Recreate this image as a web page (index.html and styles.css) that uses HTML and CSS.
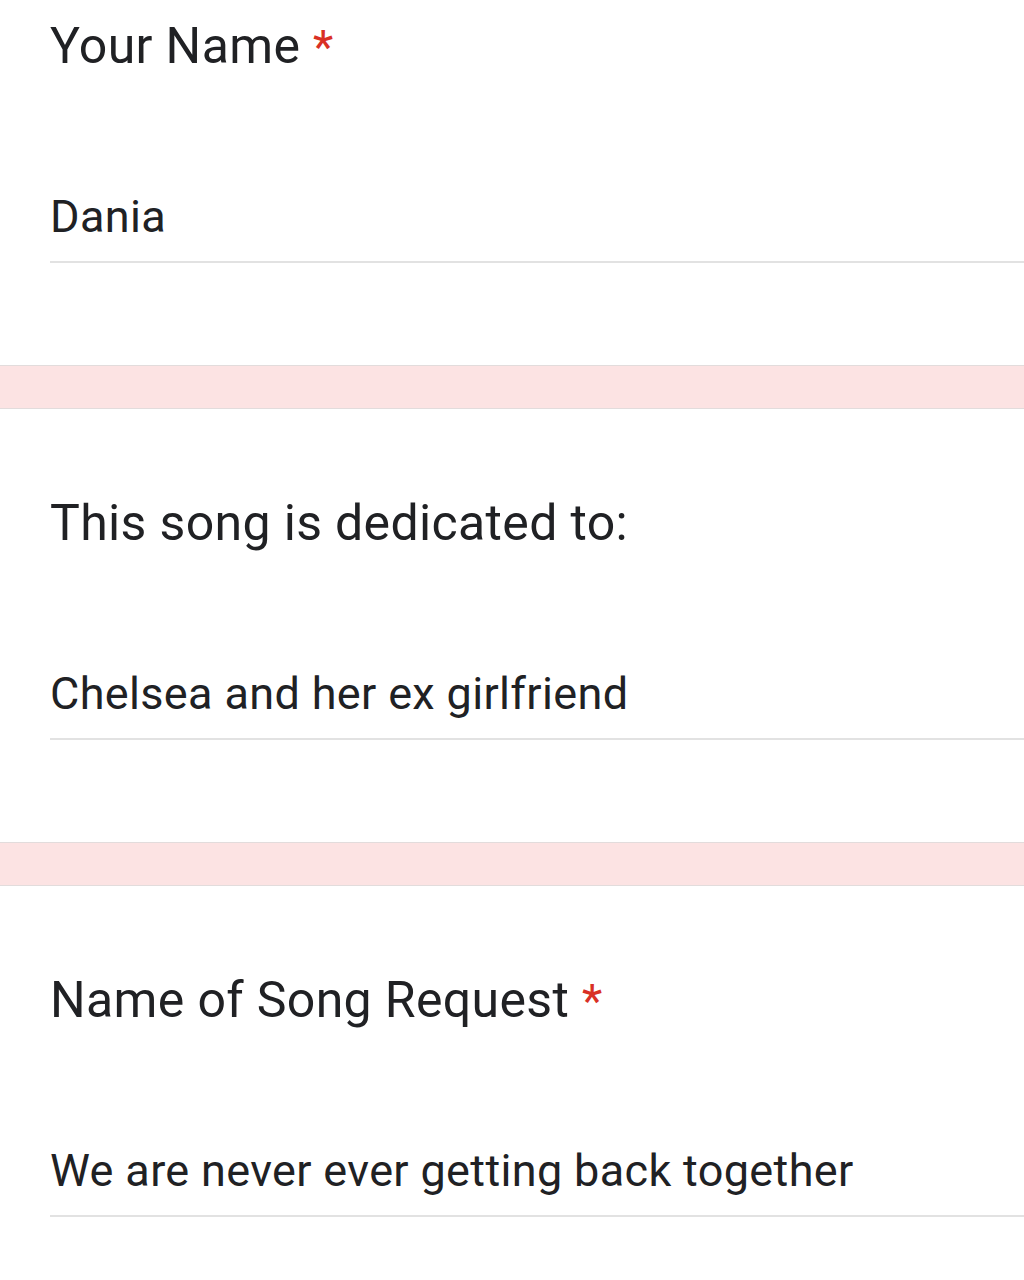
FILE: index.html
```html
<!DOCTYPE html>
<html lang="en">
<head>
<meta charset="utf-8">
<title>Song Request</title>
<link rel="stylesheet" href="styles.css">
</head>
<body>
<main class="form">
  <section class="question question-first">
    <div class="label">Your Name <span class="req">*</span></div>
    <div class="answer">Dania</div>
  </section>
  <div class="band"></div>
  <section class="question">
    <div class="label">This song is dedicated to:</div>
    <div class="answer">Chelsea and her ex girlfriend</div>
  </section>
  <div class="band"></div>
  <section class="question">
    <div class="label">Name of Song Request <span class="req">*</span></div>
    <div class="answer">We are never ever getting back together</div>
  </section>
</main>
</body>
</html>
```

FILE: styles.css
```css
html, body {
  margin: 0;
  padding: 0;
  background: #ffffff;
}
body {
  font-family: Roboto, "Noto Sans", "Liberation Sans", sans-serif;
  color: #202124;
  width: 1024px;
  height: 1280px;
  overflow: hidden;
}
.form {
  display: flex;
  flex-direction: column;
}
.question {
  display: flex;
  flex-direction: column;
  padding: 84px 0 102px 50px;
}
.question-first {
  padding-top: 16px;
}
.label {
  font-size: 50px;
  line-height: 60px;
  height: 60px;
  letter-spacing: 0.35px;
  white-space: nowrap;
}
.req {
  color: #d93025;
  font-size: 47px;
}
.answer {
  margin-top: 114px;
  font-size: 45px;
  line-height: 54px;
  letter-spacing: 0.35px;
  padding-bottom: 17px;
  border-bottom: 2px solid #e2e2e2;
  white-space: nowrap;
}
.band {
  height: 42px;
  background: #fce3e3;
  border-top: 1px solid #e2dcdc;
  border-bottom: 1px solid #e2dcdc;
}
```
